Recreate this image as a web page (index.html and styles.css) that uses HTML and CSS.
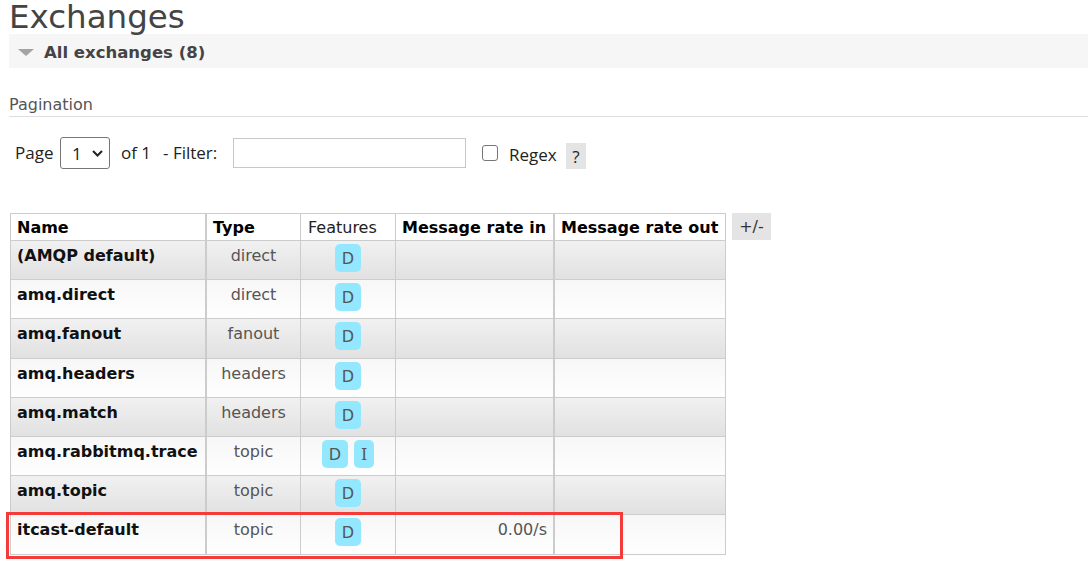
FILE: index.html
```html
<!DOCTYPE html>
<html>
<head>
<meta charset="utf-8">
<link rel="stylesheet" href="styles.css">
</head>
<body>
<div class="page">
  <h1 class="title">Exchanges</h1>
  <div class="section-bar"><span class="tri"></span><span class="section-title">All exchanges (8)</span></div>
  <div class="pagination-label">Pagination</div>
  <div class="pager">
    <span class="lbl lbl-page">Page</span>
    <div class="select"><span>1</span><svg class="chev" width="11" height="7" viewBox="0 0 11 7"><path d="M1 1 L5.5 5.5 L10 1" fill="none" stroke="#222" stroke-width="2"/></svg></div>
    <span class="lbl lbl-of">of 1</span>
    <span class="lbl lbl-filter">- Filter:</span>
    <div class="input"></div>
    <div class="checkbox"></div>
    <span class="lbl lbl-regex">Regex</span>
    <span class="help">?</span>
  </div>
  <div class="table-area">
    <div class="table-wrap">
      <table class="list">
        <thead>
          <tr>
            <th class="c-name">Name</th>
            <th class="c-type">Type</th>
            <th class="c-feat plain">Features</th>
            <th class="c-in">Message rate in</th>
            <th class="c-out">Message rate out</th>
          </tr>
        </thead>
        <tbody>
          <tr class="odd"><td class="c-name">(AMQP default)</td><td class="c-type">direct</td><td class="c-feat"><span class="badge">D</span></td><td class="c-in"></td><td class="c-out"></td></tr>
          <tr class="even"><td class="c-name">amq.direct</td><td class="c-type">direct</td><td class="c-feat"><span class="badge">D</span></td><td class="c-in"></td><td class="c-out"></td></tr>
          <tr class="odd"><td class="c-name">amq.fanout</td><td class="c-type">fanout</td><td class="c-feat"><span class="badge">D</span></td><td class="c-in"></td><td class="c-out"></td></tr>
          <tr class="even"><td class="c-name">amq.headers</td><td class="c-type">headers</td><td class="c-feat"><span class="badge">D</span></td><td class="c-in"></td><td class="c-out"></td></tr>
          <tr class="odd"><td class="c-name">amq.match</td><td class="c-type">headers</td><td class="c-feat"><span class="badge">D</span></td><td class="c-in"></td><td class="c-out"></td></tr>
          <tr class="even"><td class="c-name">amq.rabbitmq.trace</td><td class="c-type">topic</td><td class="c-feat"><span class="badge">D</span><span class="badge badge-i">I</span></td><td class="c-in"></td><td class="c-out"></td></tr>
          <tr class="odd"><td class="c-name">amq.topic</td><td class="c-type">topic</td><td class="c-feat"><span class="badge">D</span></td><td class="c-in"></td><td class="c-out"></td></tr>
          <tr class="even"><td class="c-name">itcast-default</td><td class="c-type">topic</td><td class="c-feat"><span class="badge">D</span></td><td class="c-in rate">0.00/s</td><td class="c-out"></td></tr>
        </tbody>
      </table>
      <div class="highlight"></div>
    </div>
    <span class="toggle">+/-</span>
  </div>
</div>
</body>
</html>
```

FILE: styles.css
```css
* { box-sizing: border-box; }
html, body { margin: 0; padding: 0; background: #fff; overflow: hidden; }
body { font-family: "DejaVu Sans", Verdana, sans-serif; color: #444; width: 1088px; height: 575px; }
.page { padding-left: 9px; }

.title {
  margin: 0;
  font-size: 32.5px;
  font-weight: normal;
  line-height: 34px;
  height: 34px;
  color: #444;
}

.section-bar {
  height: 34px;
  background: #f6f6f6;
  display: flex;
  align-items: center;
  padding-left: 9px;
  width: 1079px;
}
.tri {
  width: 0; height: 0;
  border-left: 8px solid transparent;
  border-right: 8px solid transparent;
  border-top: 7px solid #a3a3a3;
  margin-top: 2px;
}
.section-title {
  font-weight: bold;
  font-size: 16.5px;
  color: #444;
  margin-left: 10px;
  line-height: 20px;
  padding-top: 3px;
}

.pagination-label {
  margin-top: 27px;
  font-size: 16px;
  line-height: 20px;
  color: #555;
  padding-bottom: 1px;
  border-bottom: 1px solid #dedede;
  width: 1079px;
}

.pager {
  display: flex;
  align-items: center;
  margin-top: 19px;
  height: 34px;
  font-family: "Open Sans", "Noto Sans", sans-serif;
  font-size: 17px;
  color: #222;
}
.lbl { line-height: 20px; position: relative; top: 0; }
.lbl-page { margin-left: 6px; width: 38px; }
.select {
  margin-left: 7px;
  width: 50px;
  height: 32px;
  border: 1px solid #767676;
  border-radius: 3px;
  display: flex;
  align-items: center;
  padding-left: 11px;
  font-size: 17px;
}
.select .chev { margin-left: 10px; }
.lbl-of { margin-left: 11px; width: 31px; }
.lbl-filter { margin-left: 11px; width: 63px; }
.input {
  margin-left: 7px;
  width: 233px;
  height: 30px;
  border: 1px solid #c8c8c8;
  background: #fff;
}
.checkbox {
  margin-left: 16px;
  width: 16px;
  height: 16px;
  border: 1px solid #767676;
  border-radius: 3px;
  background: #fff;
}
.lbl-regex { margin-left: 11px; width: 50px; top: 2px; }
.help {
  margin-left: 7px;
  width: 20px;
  height: 26px;
  background: #e4e4e4;
  display: flex;
  align-items: center;
  justify-content: center;
  font-size: 17px;
  position: relative;
  top: 3px;
}

.table-area {
  display: flex;
  align-items: flex-start;
  margin-top: 43px;
  margin-left: 1px;
}
.table-wrap { position: relative; }

table.list {
  border-collapse: separate;
  border-spacing: 0;
  table-layout: fixed;
  width: 716px;
  font-size: 16px;
}
table.list th, table.list td {
  border-right: 1px solid #cccccc;
  border-bottom: 1px solid #cccccc;
  text-align: left;
  vertical-align: top;
  line-height: 20px;
  white-space: nowrap;
  overflow: hidden;
}
table.list th {
  border-top: 1px solid #cccccc;
  padding: 4px 6px 2px;
  height: 28px;
  font-weight: bold;
  color: #000;
  background: #fff;
}
table.list th.plain { font-weight: normal; color: #222; }
table.list th:first-child, table.list td:first-child { border-left: 1px solid #cccccc; }
table.list .c-name { width: 197px; border-right-width: 2px; }
table.list .c-type { width: 94px; }
table.list .c-feat { width: 95px; }
table.list .c-in { width: 159px; border-right-width: 2px; }
table.list .c-out { width: 171px; }
table.list th.c-name { padding-left: 6px; }
table.list th.c-feat { padding-left: 7px; }

table.list td {
  height: 39.2px;
  padding: 5px 6px 0;
}
table.list td.c-name { font-weight: bold; color: #111; padding-left: 6px; }
table.list td.c-type { text-align: center; color: #555; }
table.list td.c-feat { text-align: center; padding: 3px 0 0; }
table.list td.rate { text-align: right; color: #555; padding-right: 6px; }

tr.odd td { background: linear-gradient(#f1f1f1, #e1e1e1); }
tr.even td { background: linear-gradient(#f7f7f7, #fefefe); }

.badge {
  display: inline-block;
  height: 28px;
  line-height: 30px;
  padding: 0 7px;
  border-radius: 5px;
  background: #93e8ff;
  color: #555;
  font-size: 16px;
  vertical-align: top;
}
.badge-i { margin-left: 6px; padding: 0 7px; font-family: "DejaVu Serif", serif; }

.highlight {
  position: absolute;
  left: -4px;
  top: 299px;
  width: 617px;
  height: 47px;
  border: 3px solid #f53a3a;
  pointer-events: none;
}

.toggle {
  margin-left: 6px;
  width: 39px;
  height: 27px;
  background: #e4e4e4;
  display: flex;
  align-items: center;
  justify-content: center;
  font-size: 16px;
  color: #333;
}
```
